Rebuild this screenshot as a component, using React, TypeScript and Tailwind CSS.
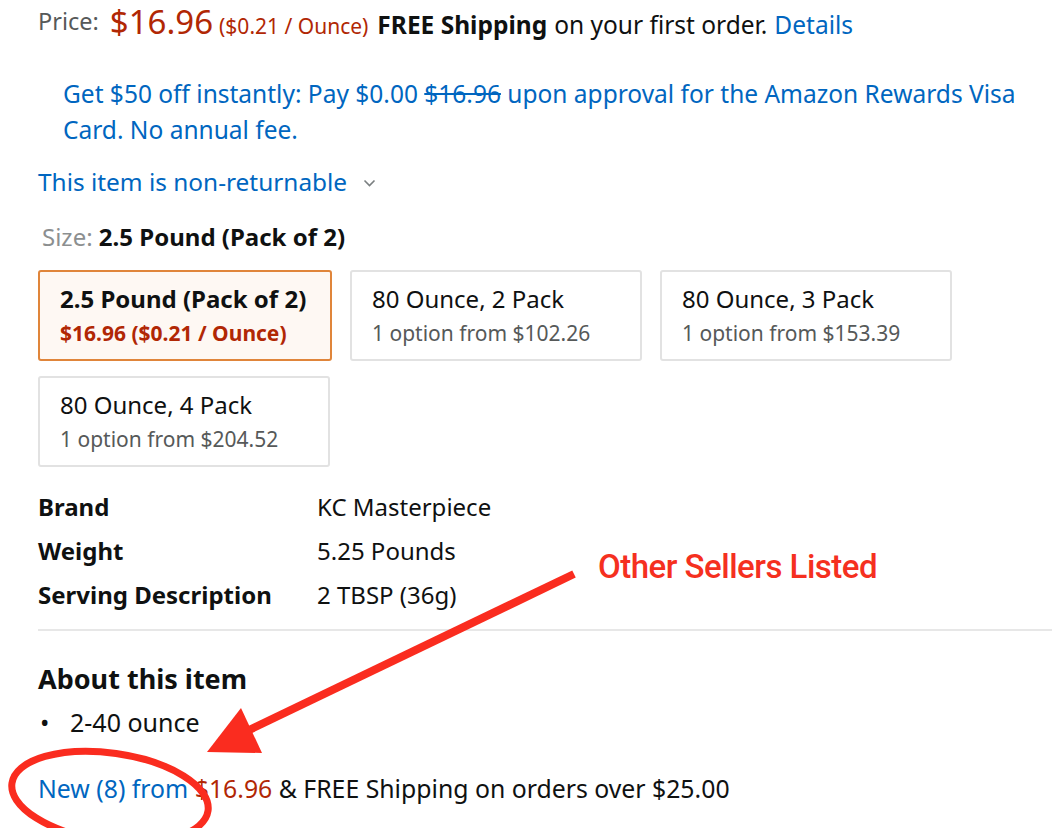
import React from "react"

const sizes = [
  { title: "2.5 Pound (Pack of 2)", sub: "$16.96 ($0.21 / Ounce)", selected: true },
  { title: "80 Ounce, 2 Pack", sub: "1 option from $102.26" },
  { title: "80 Ounce, 3 Pack", sub: "1 option from $153.39" },
  { title: "80 Ounce, 4 Pack", sub: "1 option from $204.52" },
]

const details = [
  ["Brand", "KC Masterpiece"],
  ["Weight", "5.25 Pounds"],
  ["Serving Description", "2 TBSP (36g)"],
]

function SizeOption({ title, sub, selected }: { title: string; sub: string; selected?: boolean }) {
  return (
    <div
      className={
        selected
          ? "w-[294px] h-[91px] rounded-[3px] border-2 border-[#e0853a] bg-[#fef8f3] pl-[20px] pt-[10px]"
          : "w-[292px] h-[91px] rounded-[3px] border-2 border-[#e2e2e2] bg-white pl-[20px] pt-[10px]"
      }
    >
      <div className={selected ? "text-[24px] leading-[33px] font-bold text-[#0f1111]" : "text-[24px] leading-[33px] text-[#0f1111]"}>
        {title}
      </div>
      <div className={selected ? "mt-[2px] text-[21px] leading-[33px] font-bold text-[#b12704]" : "mt-[2px] text-[21px] leading-[33px] text-[#565959]"}>
        {sub}
      </div>
    </div>
  )
}

export default function App() {
  return (
    <div className="relative w-[1052px] h-[828px] overflow-hidden bg-white font-['Noto_Sans',sans-serif] text-[#0f1111]">
      <div className="pl-[38px]">
        {/* price row */}
        <div className="flex items-baseline h-[50px] pt-[2px] whitespace-nowrap">
          <span className="self-start mt-[4px] text-[23.5px] leading-[30px] text-[#565959] mr-[11px]">Price:</span>
          <span className="text-[33px] leading-[40px] text-[#b12704] mr-[6px]">$16.96</span>
          <span className="text-[21px] text-[#b12704] mr-[9px]">($0.21 / Ounce)</span>
          <span className="text-[24.5px] font-bold mr-[7px]">FREE Shipping</span>
          <span className="text-[24.5px]">on your first order.</span>
          <span className="text-[24.5px] text-[#0066c0] ml-[7px]">Details</span>
        </div>

        {/* rewards card */}
        <div className="mt-[26px] pl-[25px] text-[24.5px] leading-[36px] text-[#0066c0] whitespace-nowrap">
          Get $50 off instantly: Pay $0.00 <span className="line-through">$16.96</span> upon approval for the Amazon Rewards Visa
          <br />
          Card. No annual fee.
        </div>

        {/* returns */}
        <div className="mt-[16px] flex items-center h-[36px] text-[24.4px] text-[#0066c0]">
          <span>This item is non-returnable</span>
          <svg className="ml-[16px] mt-[2px]" width="13" height="9" viewBox="0 0 13 9" fill="none">
            <path d="M1.5 1.5 6.5 6.5 11.5 1.5" stroke="#7a7f80" strokeWidth="1.6" />
          </svg>
        </div>

        {/* size */}
        <div className="mt-[21px] pl-[4px] h-[32px] leading-[32px] text-[24px]">
          <span className="text-[#8c8f90]">Size: </span>
          <span className="font-bold">2.5 Pound (Pack of 2)</span>
        </div>

        <div className="mt-[17px] w-[930px] flex flex-wrap gap-x-[18px] gap-y-[15px]">
          {sizes.map((s) => (
            <SizeOption key={s.title} {...s} />
          ))}
        </div>

        {/* details table */}
        <div className="mt-[18px] grid grid-cols-[279px_1fr] text-[24px] leading-[44px]">
          {details.map(([k, v]) => (
            <React.Fragment key={k}>
              <div className="font-bold">{k}</div>
              <div>{v}</div>
            </React.Fragment>
          ))}
        </div>

        <div className="mt-[12px] h-[2px] bg-[#e7e7e7]" />

        <div className="mt-[30px] text-[27px] leading-[36px] font-bold">About this item</div>
        <ul className="mt-[7px] text-[25px] leading-[36px]">
          <li className="flex">
            <span className="w-[32px] pl-[2px]">•</span>
            <span>2-40 ounce</span>
          </li>
        </ul>

        <div className="mt-[30px] text-[24.8px] leading-[36px] whitespace-nowrap">
          <span className="text-[#0066c0]">New (8) from </span>
          <span className="text-[#b12704]">$16.96</span>
          <span> &amp; FREE Shipping on orders over $25.00</span>
        </div>
      </div>

      {/* annotation overlay */}
      <svg className="absolute left-0 top-0 pointer-events-none" width="1052" height="828" viewBox="0 0 1052 828">
        <line x1="574" y1="574" x2="245" y2="732" stroke="#fa2c1f" strokeWidth="8" />
        <polygon points="207,752 241,708 262,753" fill="#fa2c1f" />
        <ellipse cx="110" cy="797" rx="99" ry="44" transform="rotate(8 110 797)" fill="none" stroke="#fa2c1f" strokeWidth="7" />
      </svg>
      <div className="absolute left-[598px] top-[545px] text-[33px] leading-[44px] font-medium text-[#f5301f] font-['Roboto',sans-serif] tracking-[-0.5px]">
        Other Sellers Listed
      </div>
    </div>
  )
}
